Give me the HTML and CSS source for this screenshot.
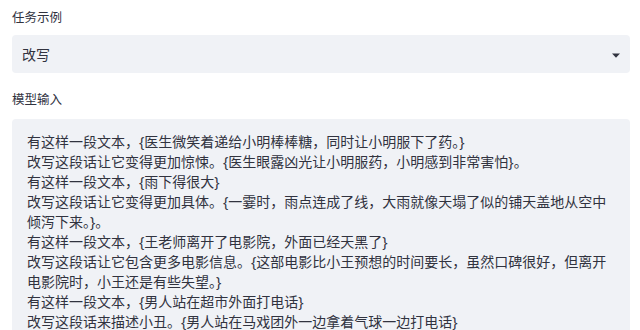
FILE: index.html
```html
<!DOCTYPE html>
<html lang="zh">
  <head>
    <meta charset="UTF-8" />
    <meta name="viewport" content="width=device-width, initial-scale=1.0" />
    <title>任务示例</title>
    <link rel="stylesheet" href="styles.css">
  </head>
  <body>
    <div class="container">
      <label class="field-label">任务示例</label>
      <div class="select-box">
        <span class="select-value">改写</span>
        <svg class="select-caret" width="8" height="5" viewBox="0 0 8 5">
          <path d="M0 0.5 H8 L4 4.8 Z" fill="#31333f" />
        </svg>
      </div>

      <label class="field-label second">模型输入</label>
      <div class="text-area">有这样一段文本，{医生微笑着递给小明棒棒糖，同时让小明服下了药。}
改写这段话让它变得更加惊悚。{医生眼露凶光让小明服药，小明感到非常害怕}。
有这样一段文本，{雨下得很大}
改写这段话让它变得更加具体。{一霎时，雨点连成了线，大雨就像天塌了似的铺天盖地从空中倾泻下来。}。
有这样一段文本，{王老师离开了电影院，外面已经天黑了}
改写这段话让它包含更多电影信息。{这部电影比小王预想的时间要长，虽然口碑很好，但离开电影院时，小王还是有些失望。}
有这样一段文本，{男人站在超市外面打电话}
改写这段话来描述小丑。{男人站在马戏团外一边拿着气球一边打电话}</div>
    </div>
  </body>
</html>
```

FILE: styles.css
```css
body,
html {
  margin: 0;
  padding: 0;
  font-family: "Noto Sans", "Noto Sans CJK SC", sans-serif;
  background-color: #ffffff;
  color: #31333f;
  overflow: hidden;
}

.container {
  padding: 8px 10px 0 12px;
}

.field-label {
  display: block;
  font-size: 12.5px;
  line-height: 20px;
  height: 20px;
  margin-bottom: 7px;
}

.field-label.second {
  margin-top: 17px;
  margin-bottom: 9px;
}

.select-box {
  display: flex;
  align-items: center;
  justify-content: space-between;
  height: 38px;
  background-color: #f0f2f6;
  border-radius: 4px;
  padding: 0 10px 0 10px;
  box-sizing: border-box;
}

.select-value {
  font-size: 14px;
  line-height: 20px;
  padding-top: 1px;
}

.select-caret {
  margin-top: 2px;
}

.text-area {
  background-color: #f0f2f6;
  border-radius: 4px 4px 0 0;
  padding: 13px 16px 0 15px;
  font-size: 14px;
  line-height: 20px;
  white-space: pre-wrap;
  height: 200px;
  overflow: hidden;
}
```
